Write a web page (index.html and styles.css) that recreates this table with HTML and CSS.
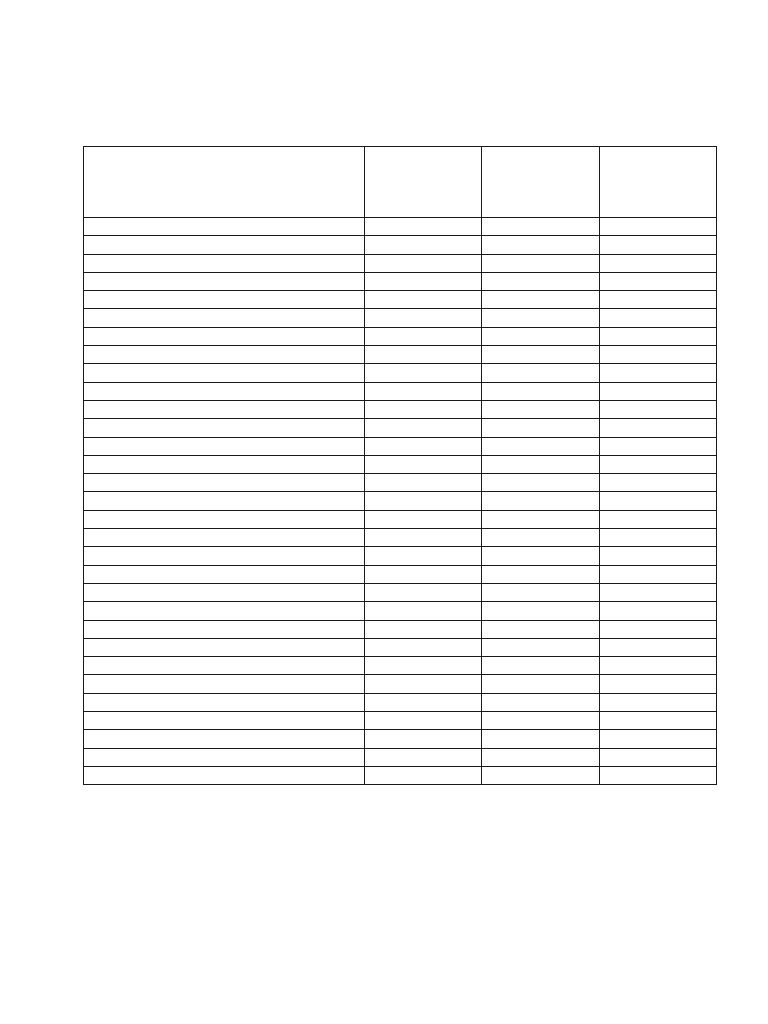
FILE: index.html
```html
<!DOCTYPE html>
<html>
<head>
<meta charset="utf-8">
<link rel="stylesheet" href="styles.css">
</head>
<body>
<table class="sheet">
<colgroup><col class="c1"><col class="c2"><col class="c3"><col class="c4"></colgroup>
<thead><tr class="head"><th></th><th></th><th></th><th></th></tr></thead>
<tbody>
<tr><td></td><td></td><td></td><td></td></tr>
<tr><td></td><td></td><td></td><td></td></tr>
<tr><td></td><td></td><td></td><td></td></tr>
<tr><td></td><td></td><td></td><td></td></tr>
<tr><td></td><td></td><td></td><td></td></tr>
<tr><td></td><td></td><td></td><td></td></tr>
<tr><td></td><td></td><td></td><td></td></tr>
<tr><td></td><td></td><td></td><td></td></tr>
<tr><td></td><td></td><td></td><td></td></tr>
<tr><td></td><td></td><td></td><td></td></tr>
<tr><td></td><td></td><td></td><td></td></tr>
<tr><td></td><td></td><td></td><td></td></tr>
<tr><td></td><td></td><td></td><td></td></tr>
<tr><td></td><td></td><td></td><td></td></tr>
<tr><td></td><td></td><td></td><td></td></tr>
<tr><td></td><td></td><td></td><td></td></tr>
<tr><td></td><td></td><td></td><td></td></tr>
<tr><td></td><td></td><td></td><td></td></tr>
<tr><td></td><td></td><td></td><td></td></tr>
<tr><td></td><td></td><td></td><td></td></tr>
<tr><td></td><td></td><td></td><td></td></tr>
<tr><td></td><td></td><td></td><td></td></tr>
<tr><td></td><td></td><td></td><td></td></tr>
<tr><td></td><td></td><td></td><td></td></tr>
<tr><td></td><td></td><td></td><td></td></tr>
<tr><td></td><td></td><td></td><td></td></tr>
<tr><td></td><td></td><td></td><td></td></tr>
<tr><td></td><td></td><td></td><td></td></tr>
<tr><td></td><td></td><td></td><td></td></tr>
<tr><td></td><td></td><td></td><td></td></tr>
<tr><td></td><td></td><td></td><td></td></tr>
</tbody>
</table>
</body>
</html>
```
FILE: styles.css
```css
html, body {
  margin: 0;
  padding: 0;
  background: #fff;
  font-family: "Liberation Sans", Arial, sans-serif;
}
body {
  padding: 146px 0 0 83px;
}
.sheet {
  border-collapse: collapse;
  table-layout: fixed;
  width: 633px;
}
.c1 { width: 281px; }
.c2 { width: 117px; }
.c3 { width: 118px; }
.c4 { width: 117px; }
.sheet th, .sheet td {
  border: 1px solid #1a1a1a;
  padding: 0;
}
.head { height: 71px; }
.sheet tbody tr { height: 18.3px; }
```
